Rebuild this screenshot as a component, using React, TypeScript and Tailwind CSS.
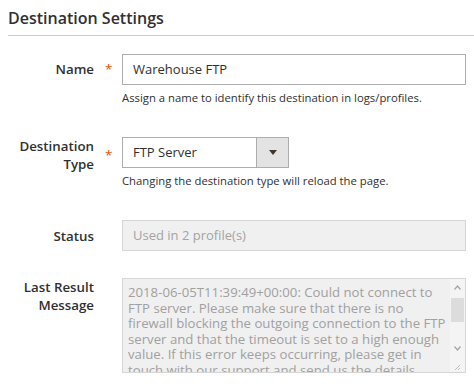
import React from "react";

const message =
  "2018-06-05T11:39:49+00:00: Could not connect to FTP server. Please make sure that there is no firewall blocking the outgoing connection to the FTP server and that the timeout is set to a high enough value. If this error keeps occurring, please get in touch with our support and send us the details.";

function Label({ lines }: { lines: string[] }) {
  return (
    <div className="w-[94px] shrink-0 text-right text-[13.3px] font-semibold leading-[18px] text-[#303030]">
      {lines.map((l) => (
        <div key={l}>{l}</div>
      ))}
    </div>
  );
}

function Required() {
  return <div className="w-[28px] shrink-0 pl-[11px] text-[13.3px] text-[#eb5202]">*</div>;
}

export default function App() {
  return (
    <div className="h-[384px] w-[474px] overflow-hidden bg-white font-['Open_Sans',sans-serif] text-[#303030]">
      {/* Header */}
      <div className="pl-[8px] pt-[6px]">
        <h2 className="text-[16px] font-semibold leading-[24px] text-[#303030]">Destination Settings</h2>
        <div className="mt-[5px] h-px bg-[#cccccc]" />
      </div>

      {/* Name */}
      <div className="mt-[18px] flex">
        <div className="flex pt-[6px]">
          <Label lines={["Name"]} />
          <Required />
        </div>
        <div className="mr-[8px] flex-1">
          <div className="flex h-[31px] items-center border border-[#adadad] px-[10px] text-[13px] text-[#303030]">
            Warehouse FTP
          </div>
          <p className="mt-[5px] text-[11.3px] leading-[16px] text-[#303030]">
            Assign a name to identify this destination in logs/profiles.
          </p>
        </div>
      </div>

      {/* Destination Type */}
      <div className="mt-[31px] flex">
        <div className="flex">
          <Label lines={["Destination", "Type"]} />
          <div className="pt-[9px]">
            <Required />
          </div>
        </div>
        <div className="mr-[8px] flex-1">
          <div className="flex h-[31px] w-[167px] border border-[#adadad]">
            <div className="flex flex-1 items-center px-[10px] text-[13px]">FTP Server</div>
            <div className="flex w-[32px] items-center justify-center border-l border-[#adadad] bg-[#e3e3e3]">
              <svg width="8" height="5" viewBox="0 0 8 5">
                <path d="M0 0h8L4 5z" fill="#41362f" />
              </svg>
            </div>
          </div>
          <p className="mt-[5px] text-[11.3px] leading-[16px] text-[#303030]">
            Changing the destination type will reload the page.
          </p>
        </div>
      </div>

      {/* Status */}
      <div className="mt-[31px] flex">
        <div className="flex pt-[7px]">
          <Label lines={["Status"]} />
          <div className="w-[28px] shrink-0" />
        </div>
        <div className="mr-[8px] flex h-[31px] flex-1 items-center border border-[#d6d6d6] bg-[#f0f0f0] px-[10px] text-[13px] text-[#a3a3a3]">
          Used in 2 profile(s)
        </div>
      </div>

      {/* Last Result Message */}
      <div className="mt-[27px] flex">
        <div className="flex">
          <Label lines={["Last Result", "Message"]} />
          <div className="w-[28px] shrink-0" />
        </div>
        <div className="mr-[8px] flex h-[95px] flex-1 border border-[#d6d6d6] bg-[#f0f0f0]">
          <div className="flex-1 overflow-hidden pl-[5px] pt-[6px] text-[13.2px] leading-[15.6px] text-[#a0a0a0]">
            {message}
          </div>
          <div className="flex w-[15px] shrink-0 flex-col items-center bg-[#f4f4f4]">
            <svg className="mt-[6px]" width="7" height="5" viewBox="0 0 7 5">
              <path d="M0.5 4.5L3.5 1L6.5 4.5" fill="none" stroke="#a3a3a3" strokeWidth="1.2" />
            </svg>
            <div className="mt-[8px] h-[24px] w-[13px] bg-[#dcdcdc]" />
            <svg className="mt-[24px]" width="7" height="5" viewBox="0 0 7 5">
              <path d="M0.5 0.5L3.5 4L6.5 0.5" fill="none" stroke="#a3a3a3" strokeWidth="1.2" />
            </svg>
            <svg className="mt-auto mb-[1px]" width="7" height="7" viewBox="0 0 7 7">
              <path d="M6 1L1 6M6 4L4 6" stroke="#bdbdbd" strokeWidth="1" />
            </svg>
          </div>
        </div>
      </div>
    </div>
  );
}
